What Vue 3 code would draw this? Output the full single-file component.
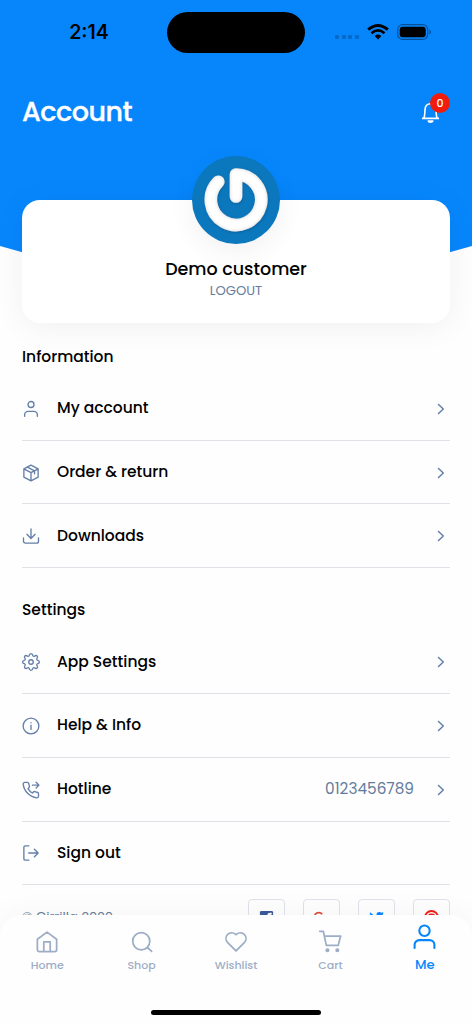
<script setup>
const information = [
  { icon: 'user', label: 'My account' },
  { icon: 'box', label: 'Order & return' },
  { icon: 'download', label: 'Downloads' }
]
const settings = [
  { icon: 'gear', label: 'App Settings' },
  { icon: 'info', label: 'Help & Info' },
  { icon: 'phone', label: 'Hotline', value: '0123456789' },
  { icon: 'exit', label: 'Sign out', plain: true }
]
const groups = [
  { title: 'Information', rows: information },
  { title: 'Settings', rows: settings }
]
const paths = {
  user: 'M3.500 21.700v-2a4.500 4.500 0 0 1 4.500-4.500h8a4.500 4.500 0 0 1 4.500 4.500v2M16 6a4 4 0 1 1-8 0a4 4 0 0 1 8 0z',
  box: 'M12 1.500L21.500 6.500V17.500L12 22.500L2.500 17.500V6.500zM2.500 6.500L12 11.500L21.500 6.500M12 11.500V22.500M7.200 4.100L16.700 9.100V13',
  download: 'M2 14.500V19a2.500 2.500 0 0 0 2.500 2.500h15a2.500 2.500 0 0 0 2.500-2.500v-4.500M12 2.500v12.500M6.500 9.800L12 15.300L17.500 9.800',
  gear: 'M12 .8C14 .8 14.300 2 14.600 3.800C15.200 4.500 16 4.600 16.700 4.300C18.100 3.200 19.200 3 20.200 4C21.200 5 20.900 6 19.800 7.400C19.500 8.200 19.700 8.900 20.300 9.400C22 9.700 23.200 10.200 23.200 12C23.200 13.800 22 14.300 20.300 14.600C19.700 15.100 19.500 15.800 19.800 16.600C20.900 18 21.200 19 20.200 20C19.200 21 18.100 20.800 16.700 19.700C16 19.400 15.200 19.500 14.600 20.200C14.300 22 13.900 23.200 12 23.200C10.100 23.200 9.700 22 9.400 20.200C8.800 19.500 8 19.400 7.300 19.700C5.900 20.800 4.800 21 3.800 20C2.800 19 3.100 18 4.200 16.600C4.500 15.800 4.300 15.100 3.700 14.600C2 14.300 .8 13.800 .8 12C.8 10.200 2 9.700 3.700 9.400C4.300 8.900 4.500 8.200 4.200 7.400C3.100 6 2.800 5 3.800 4C4.800 3 5.900 3.200 7.300 4.300C8 4.600 8.800 4.500 9.400 3.800C9.700 2 10 .8 12 .8zM15 12a3 3 0 1 1-6 0a3 3 0 0 1 6 0z',
  info: 'M22.500 12a10.500 10.500 0 1 1-21 0a10.500 10.500 0 0 1 21 0zM12 11v5.500M12 7.500v.3',
  phone: 'M22 17v3.200a2.200 2.200 0 0 1-2.400 2.200C10.500 21.500 2.500 13.500 1.600 4.200A2.200 2.200 0 0 1 3.800 1.800H7a2 2 0 0 1 2 1.700c.2 1.200.5 2.200.9 3.200a2 2 0 0 1-.5 2.100L8 10.200a16 16 0 0 0 5.800 5.800l1.400-1.400a2 2 0 0 1 2.100-.5c1 .4 2 .7 3.100.9A2 2 0 0 1 22 17zM14 5.500h8.500M18.800 1.700l3.800 3.800l-3.800 3.800',
  exit: 'M9 2.500H4.500a2 2 0 0 0-2 2V19.500a2 2 0 0 0 2 2h4.500M9 12H21.500M16.500 7l5 5l-5 5'
}
const tabs = [
  { label: 'Home', icon: 'M1.500 9L12 1.200l10.500 7.800V20.500a2 2 0 0 1-2 2h-17a2 2 0 0 1-2-2zM8.500 22.500V11.800h7V22.500' },
  { label: 'Shop', icon: 'M20.500 11.200a9.300 9.300 0 1 1-18.600 0a9.300 9.300 0 0 1 18.600 0zM18 18L22.500 22.300' },
  { label: 'Wishlist', icon: 'M12 21.800L2.700 12.300A6.200 6.200 0 0 1 11.300 3.400L12 4.100L12.700 3.400A6.200 6.200 0 0 1 21.300 12.300z' },
  { label: 'Cart', cart: true, icon: 'M.8 .3H4.700L8 15.700H21L23.600 5.500H5.800' },
  { label: 'Me', active: true, icon: 'M2.500 22v-3a4.500 4.500 0 0 1 4.500-4.500h10a4.500 4.500 0 0 1 4.500 4.500v3M17 5.500a5 5 0 1 1-10 0a5 5 0 0 1 10 0z' }
]
</script>

<template>
  <div class="screen">
    <header class="hero">
      <div class="status">
        <span class="time">2:14</span>
        <span class="island"></span>
        <div class="signals">
          <span class="dots"><i v-for="n in 4" :key="n"></i></span>
          <svg class="wifi" viewBox="0 0 22 16">
            <path d="M1.200 5.700Q11 -2.800 20.800 5.700" fill="none" stroke="#000" stroke-width="2.900" />
            <path d="M4.500 9.200Q11 3.500 17.500 9.200" fill="none" stroke="#000" stroke-width="2.700" />
            <path d="M7.700 12Q11 9.200 14.300 12L11 15.500z" />
          </svg>
          <svg class="battery" viewBox="0 0 35 16">
            <rect x=".7" y=".7" width="30" height="14.600" rx="4.800" fill="none" stroke="#000" stroke-opacity=".4" stroke-width="1.200" />
            <rect x="2.700" y="2.700" width="26" height="10.600" rx="3" />
            <path d="M32.500 5.500q3 2.500 0 5z" fill-opacity=".45" />
          </svg>
        </div>
      </div>
      <div class="title">
        <h1>Account</h1>
        <div class="bell">
          <svg viewBox="0 0 20 22" fill="none" stroke="#fff" stroke-width="1.700" stroke-linejoin="round">
            <path d="M1 17.200h18M2.900 17c1-1.400 1.100-2.700 1.300-8.800C4.400 4.400 6.400 1.800 10 1.800s5.600 2.600 5.800 6.400c.2 6.100.3 7.400 1.300 8.800" />
            <path d="M7.600 20c.5 1.600 4.300 1.600 4.800 0z" fill="#fff" />
          </svg>
          <span class="badge">0</span>
        </div>
      </div>
    </header>

    <section class="card">
      <svg class="avatar" viewBox="0 0 88 88">
        <defs>
          <filter id="relief" x="-20%" y="-20%" width="140%" height="140%">
            <feDropShadow dx=".5" dy=".8" stdDeviation="1" flood-color="#064a7c" flood-opacity=".6" />
          </filter>
          <filter id="soft" x="-20%" y="-20%" width="140%" height="140%">
            <feGaussianBlur stdDeviation=".8" />
          </filter>
        </defs>
        <circle cx="44" cy="44" r="44" fill="#0b77bc" />
        <g fill="none" stroke-linecap="round" stroke-linejoin="round">
          <path d="M26.300 25.800A25.200 25.200 0 1 0 44 18.500V40.500" stroke="#ebebeb" stroke-width="12.600" filter="url(#relief)" />
          <path d="M26.300 25.800A25.200 25.200 0 1 0 44 18.500V40.500" stroke="#fff" stroke-width="9.600" filter="url(#soft)" />
        </g>
      </svg>
      <div class="name">Demo customer</div>
      <div class="logout">LOGOUT</div>
    </section>

    <section v-for="g in groups" :key="g.title" class="group">
      <h2>{{ g.title }}</h2>
      <div v-for="r in g.rows" :key="r.label" class="row">
        <svg class="row-icon" viewBox="0 0 24 24"><path :d="paths[r.icon]" /></svg>
        <span class="label">{{ r.label }}</span>
        <span v-if="r.value" class="value">{{ r.value }}</span>
        <svg v-if="!r.plain" class="chevron" viewBox="0 0 8 12"><path d="M1.500 1.500L6.300 6L1.500 10.500" /></svg>
      </div>
    </section>

    <footer class="foot">
      <span class="copy">© Cirrilla 2020</span>
      <div class="social">
        <span><svg viewBox="0 0 16 16"><rect x="1" y="1" width="14" height="14" rx="1.500" fill="#3b5998" /><path d="M9 15V9.500H7.500V7H9V5.500Q9 3 12 3h1.500v2H12q-.8 0-.8 1v1h2.200l-.4 2.500h-1.800V15z" fill="#fff" /></svg></span>
        <span><svg viewBox="0 0 18 16" fill="none" stroke="#dd4b39" stroke-width="2.200"><path d="M9.800 4A5.200 5.200 0 1 0 10.900 8H6M13.200 7.200h4.200M15.300 5.100v4.200" /></svg></span>
        <span><svg viewBox="0 0 16 16"><path d="M1 2.500q3 3.300 7 3.500Q7.500 2 11 2q1.400 0 2.300.9L15.400 2l-1 1.900 1.400-.2-1.500 1.600C14.500 13 6 17 .5 13.200q2.800 0 4.200-1.300Q2.500 11.500 2 9.700h1.400Q1.200 8.800 1 6.500l1.300.4Q.1 5 1 2.500" fill="#0a84ff" /></svg></span>
        <span><svg viewBox="0 0 16 16"><circle cx="8" cy="8" r="7" fill="none" stroke="#ee1f16" stroke-width="2" /><path d="M5.500 9Q3.500 4.500 8 4.500t3 4Q9.500 11 8 9M8 7L6.500 14" fill="none" stroke="#ee1f16" stroke-width="1.700" /></svg></span>
      </div>
    </footer>

    <nav class="tabbar">
      <div v-for="t in tabs" :key="t.label" class="tab" :class="{ active: t.active }">
        <svg viewBox="0 0 24 24">
          <path :d="t.icon" />
          <template v-if="t.cart"><circle class="wheel" cx="9.200" cy="21" r="1.300" /><circle class="wheel" cx="20" cy="21" r="1.300" /></template>
        </svg>
        <span>{{ t.label }}</span>
      </div>
      <span class="home-bar"></span>
    </nav>
  </div>
</template>

<style>
body { background: #fefefe; }
</style>

<style scoped>
.screen {
  position: relative;
  width: 472px;
  height: 1024px;
  overflow: hidden;
  background: #fefefe;
  color: #000;
  font-family: Poppins, Inter, "Open Sans", sans-serif;
  display: flex;
  flex-direction: column;
}
.screen svg { display: block; overflow: visible; flex: none; }
.hero {
  flex: none;
  height: 312px;
  margin-bottom: -112px;
  background: #0786fc;
  clip-path: polygon(0 0, 100% 0, 100% 246px, 50% 312px, 0 246px);
}
.status {
  display: grid;
  grid-template-columns: 167px 138px 167px;
  height: 64px;
  align-items: center;
}
.time { font-family: Inter, sans-serif; font-weight: 600; font-size: 19.500px; text-align: center; padding-left: 11px; }
.island { height: 41px; border-radius: 21px; background: #000; }
.signals { display: flex; align-items: center; padding-left: 30px; }
.dots { display: flex; gap: 2.600px; padding-top: 10px; }
.dots i { width: 4px; height: 4px; border-radius: 1.300px; background: #0669c8; }
.wifi { width: 22px; height: 16px; margin-left: 8px; margin-top: -1px; }
.battery { width: 35px; height: 16px; margin-left: 8px; }
.title { display: flex; justify-content: space-between; align-items: center; height: 96px; padding: 0 22px; }
h1 { margin: 0; color: #fff; font-size: 27px; font-weight: 500; letter-spacing: -.5px; -webkit-text-stroke: .35px #fff; }
.bell { position: relative; width: 30px; height: 22px; }
.bell svg { width: 19px; height: 21px; margin-top: 1px; margin-left: .5px; }
.badge {
  position: absolute; left: 10px; top: -8px; width: 20px; height: 20px; border-radius: 50%;
  background: #f21c0d; color: #fff; font-size: 11px; font-weight: 500; line-height: 20px; text-align: center;
}
.card {
  position: relative;
  flex: none;
  height: 123px;
  margin: 0 22px;
  border-radius: 18px;
  background: #fff;
  box-shadow: 0 4px 32px rgba(0, 0, 0, .06);
  display: flex;
  flex-direction: column;
  align-items: center;
}
.avatar { width: 88px; height: 88px; margin-top: -44px; border-radius: 50%; box-shadow: 0 8px 28px rgba(0, 0, 0, .06); }
.name { margin-top: 13px; font-size: 17.500px; line-height: 24px; font-weight: 500; }
.logout { margin-top: 2px; font-size: 13.100px; line-height: 16px; color: #647c9c; }
.group { flex: none; margin: 0 22px; padding-top: 20.600px; position: relative; }
.group + .group { padding-top: 29px; }
h2 { margin: 0; font-size: 15.500px; line-height: 25.600px; height: 33.400px; font-weight: 500; }
.row {
  box-sizing: border-box;
  height: 63.700px;
  border-bottom: 1px solid #dfe2e6;
  display: flex;
  align-items: center;
  padding-right: 5px;
}
.row-icon { width: 18px; height: 18px; margin-top: 1px; }
.row-icon path, .chevron path { fill: none; stroke: #647fa8; stroke-width: 1.800; stroke-linecap: round; stroke-linejoin: round; }
.label { flex: 1; margin-left: 17px; padding-bottom: 1px; font-size: 15.500px; font-weight: 500; }
.value { margin-right: 23px; padding-bottom: 1px; font-size: 15.300px; color: #647c9c; }
.chevron { width: 8px; height: 12px; margin-top: 1px; }
.chevron path { stroke-width: 1.500; }
.foot { flex: none; margin: 13.500px 22px 0; height: 37px; display: flex; align-items: center; justify-content: space-between; }
.copy { font-size: 13.200px; color: #647c9c; }
.social { display: flex; gap: 18px; }
.social span {
  box-sizing: border-box; width: 37px; height: 37px; border: 1px solid #dfe2e8; border-radius: 4px;
  display: grid; place-items: center;
}
.social svg { width: 15px; height: 15px; }
.tabbar {
  position: absolute; left: 0; right: 0; bottom: 0; height: 109px;
  border-radius: 22px 22px 0 0;
  background: #fefefe;
  box-shadow: 0 -4px 28px rgba(0, 0, 0, .035);
  display: grid;
  grid-template-columns: repeat(5, 1fr);
}
.tab { display: flex; flex-direction: column; align-items: center; padding-top: 16px; color: #9dadc6; font-size: 11px; font-weight: 500; }
.tab svg { width: 22px; height: 22px; fill: none; stroke: currentColor; stroke-width: 1.900; stroke-linecap: round; stroke-linejoin: round; }
.tab .wheel { fill: currentColor; }
.tab span { margin-top: 4px; line-height: 16px; }
.tab.active { color: #0786fc; font-size: 13.100px; padding-top: 9.500px; }
.tab.active svg { width: 25px; height: 25px; stroke-width: 2; }
.tab.active span { margin-top: 7px; }
.home-bar { position: absolute; left: 151px; top: 95px; width: 170px; height: 5px; border-radius: 3px; background: #000; }
</style>
